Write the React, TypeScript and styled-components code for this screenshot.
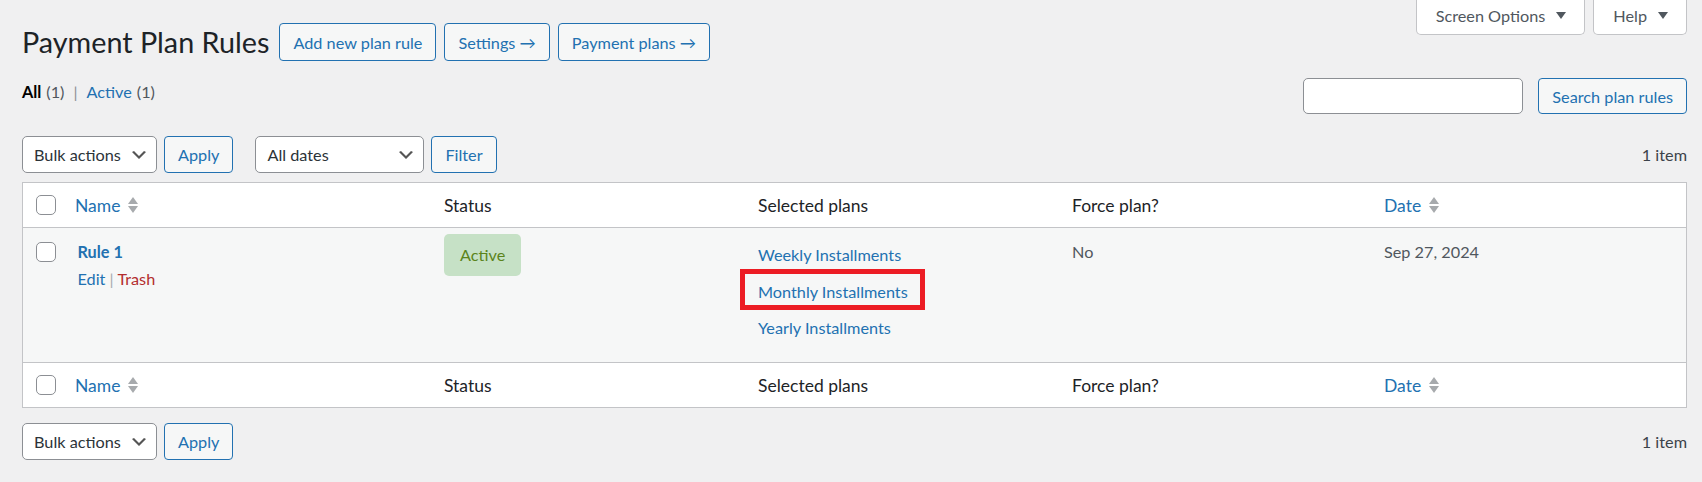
import * as React from 'react';
import styled, { createGlobalStyle } from 'styled-components';

const GlobalStyle = createGlobalStyle`
    * { box-sizing: border-box; }
    body {
        margin: 0;
        background: #f0f0f1;
        font-family: Lato, "Liberation Sans", sans-serif;
        font-size: 16.25px;
        color: #3c434a;
    }
`

const Wrap = styled.div`
    padding: 0 15px 0 22px;
    min-height: 482px;
`
const TopBar = styled.div`
    display: flex;
    justify-content: space-between;
    align-items: flex-start;
`
const Heading = styled.div`
    display: flex;
    align-items: center;
    height: 38px;
    margin-top: 23px;
`
const Title = styled.h1`
    margin: 0 10px 0 0;
    font-size: 28.75px;
    font-weight: 400;
    line-height: 38px;
    color: #1d2327;
`
const OutlineButton = styled.button<{ $h?: number }>`
    height: ${p => p.$h ?? 37}px;
    padding: 0 13px;
    border: 1px solid #2271b1;
    border-radius: 4px;
    background: #f6f7f7;
    color: #2271b1;
    font-family: inherit;
    font-size: 16.25px;
    white-space: nowrap;
    cursor: pointer;
`
const TitleAction = styled(OutlineButton)`
    margin-right: 8px;
`
const MetaLinks = styled.div`
    display: flex;
    gap: 8px;
`
const MetaTab = styled.button`
    height: 35px;
    display: flex;
    align-items: center;
    gap: 11px;
    padding: 0 18px 3px 19px;
    background: #fff;
    border: 1px solid #c3c4c7;
    border-top: none;
    border-radius: 0 0 5px 5px;
    color: #50575e;
    font-family: inherit;
    font-size: 16.25px;
`
const SubRow = styled.div`
    display: flex;
    justify-content: space-between;
    align-items: flex-start;
    margin-top: 17px;
`
const Views = styled.div`
    display: flex;
    margin-top: 2px;
    line-height: 24px;
    font-size: 16.25px;
`
const ViewLink = styled.a<{ $current?: boolean }>`
    color: ${p => p.$current ? '#000' : '#2271b1'};
    font-weight: ${p => p.$current ? 700 : 400};
    text-decoration: none;
`
const Count = styled.span`
    color: #50575e;
    margin-left: 5px;
`
const Sep = styled.span`
    color: #8c8f94;
    margin: 0 9px;
`
const SearchBox = styled.div`
    display: flex;
    gap: 15px;
`
const SearchInput = styled.input`
    width: 220px;
    height: 36px;
    border: 1px solid #8c8f94;
    border-radius: 5px;
    background: #fff;
`
const TableNav = styled.div<{ $top?: boolean }>`
    display: flex;
    justify-content: space-between;
    align-items: center;
    height: 37px;
    margin-top: ${p => p.$top ? 22 : 15}px;
`
const NavLeft = styled.div`
    display: flex;
    gap: 22px;
`
const ActionGroup = styled.div`
    display: flex;
    gap: 7px;
`
const FakeSelect = styled.div<{ $w: number }>`
    width: ${p => p.$w}px;
    height: 37px;
    display: flex;
    align-items: center;
    justify-content: space-between;
    padding: 0 7px 0 11px;
    background: #fff;
    border: 1px solid #8c8f94;
    border-radius: 5px;
    color: #2c3338;
    font-size: 16.25px;
`
const ItemCount = styled.span`
    color: #3c434a;
    font-size: 16.25px;
`
const ListTable = styled.table`
    width: 100%;
    margin-top: 9px;
    border-collapse: collapse;
    table-layout: fixed;
    background: #fff;
    border: 1px solid #c3c4c7;
`
const HeadRow = styled.tr<{ $foot?: boolean }>`
    border-${p => p.$foot ? 'top' : 'bottom'}: 1px solid #c3c4c7;
`
const HeadCell = styled.th<{ $w?: number; $check?: boolean }>`
    ${p => p.$w ? `width: ${p.$w}px;` : ''}
    height: 45px;
    padding: ${p => p.$check ? '0 0 0 13px' : '0 12.5px'};
    text-align: left;
    vertical-align: middle;
    font-size: 17.5px;
    font-weight: 400;
    color: #1d2327;
`
const SortLink = styled.a`
    display: inline-flex;
    align-items: center;
    gap: 8px;
    color: #2271b1;
    text-decoration: none;
`
const BodyRow = styled.tr`
    background: #f6f7f7;
`
const Cell = styled.td<{ $check?: boolean; $pl?: number }>`
    vertical-align: top;
    padding: ${p => p.$check ? '14px 0 0 13px' : `12px 12.5px 22px ${p.$pl ?? 12.5}px`};
    line-height: 24px;
    font-size: 16.25px;
    color: #50575e;
`
const Checkbox = styled.span`
    display: block;
    width: 20px;
    height: 20px;
    background: #fff;
    border: 1px solid #8c8f94;
    border-radius: 5px;
`
const RowTitle = styled.a`
    display: block;
    color: #2271b1;
    font-weight: 700;
    text-decoration: none;
`
const RowActions = styled.div`
    margin-top: 3px;
`
const ActionLink = styled.a<{ $danger?: boolean }>`
    color: ${p => p.$danger ? '#b32d2e' : '#2271b1'};
    text-decoration: none;
`
const ActionSep = styled.span`
    color: #a7aaad;
    margin: 0 4px;
`
const StatusBadge = styled.mark`
    display: inline-flex;
    align-items: center;
    height: 42px;
    margin-top: -6px;
    padding: 0 16px;
    border-radius: 5px;
    background: #c6e1c6;
    color: #5b841b;
`
const PlanList = styled.div`
    margin-top: 3px;
`
const PlanItem = styled.div`
    & + & { margin-top: 12.5px; }
`
const PlanLink = styled.a<{ $marked?: boolean }>`
    position: relative;
    display: inline-block;
    color: #2271b1;
    text-decoration: none;
    ${p => p.$marked ? `
    &::after {
        content: '';
        position: absolute;
        top: -11px;
        right: -17px;
        bottom: -6px;
        left: -18px;
        border: 5px solid #ec1c24;
    }` : ''}
`

const Caret = () => (
    <svg width="10" height="7" viewBox="0 0 10 7"><path d="M0 0h10L5 7z" fill="#50575e" /></svg>
);

const Chevron = () => (
    <svg width="20" height="20" viewBox="0 0 20 20"><path d="M5 6l5 5 5-5 2 1-7 7-7-7 2-1z" fill="#555" /></svg>
);

const SortIcon = () => (
    <svg width="10" height="16" viewBox="0 0 10 16">
        <path d="M0 7L5 0L10 7z" fill="#a7aaad" />
        <path d="M0 9h10L5 16z" fill="#a7aaad" />
    </svg>
);

const plans = ['Weekly Installments', 'Monthly Installments', 'Yearly Installments'];

const Columns = ({ foot }: { foot?: boolean }) => (
    <HeadRow $foot={foot}>
        <HeadCell $w={40} $check><Checkbox /></HeadCell>
        <HeadCell $w={369}><SortLink>Name <SortIcon /></SortLink></HeadCell>
        <HeadCell $w={314}>Status</HeadCell>
        <HeadCell $w={314}>Selected plans</HeadCell>
        <HeadCell $w={312}>Force plan?</HeadCell>
        <HeadCell><SortLink>Date <SortIcon /></SortLink></HeadCell>
    </HeadRow>
);

const BulkActions = () => (
    <ActionGroup>
        <FakeSelect $w={135}>Bulk actions <Chevron /></FakeSelect>
        <OutlineButton>Apply</OutlineButton>
    </ActionGroup>
);

export default function App() {
    return (
        <>
            <GlobalStyle />
            <Wrap>
                <TopBar>
                    <Heading>
                        <Title>Payment Plan Rules</Title>
                        <TitleAction $h={38}>Add new plan rule</TitleAction>
                        <TitleAction $h={38}>Settings →</TitleAction>
                        <TitleAction $h={38}>Payment plans →</TitleAction>
                    </Heading>
                    <MetaLinks>
                        <MetaTab>Screen Options <Caret /></MetaTab>
                        <MetaTab>Help <Caret /></MetaTab>
                    </MetaLinks>
                </TopBar>

                <SubRow>
                    <Views>
                        <ViewLink $current>All</ViewLink><Count>(1)</Count>
                        <Sep>|</Sep>
                        <ViewLink>Active</ViewLink><Count>(1)</Count>
                    </Views>
                    <SearchBox>
                        <SearchInput type="search" />
                        <OutlineButton $h={36}>Search plan rules</OutlineButton>
                    </SearchBox>
                </SubRow>

                <TableNav $top>
                    <NavLeft>
                        <BulkActions />
                        <ActionGroup>
                            <FakeSelect $w={169}>All dates <Chevron /></FakeSelect>
                            <OutlineButton>Filter</OutlineButton>
                        </ActionGroup>
                    </NavLeft>
                    <ItemCount>1 item</ItemCount>
                </TableNav>

                <ListTable>
                    <thead><Columns /></thead>
                    <tbody>
                        <BodyRow>
                            <Cell $check><Checkbox /></Cell>
                            <Cell $pl={15}>
                                <RowTitle>Rule 1</RowTitle>
                                <RowActions>
                                    <ActionLink>Edit</ActionLink>
                                    <ActionSep>|</ActionSep>
                                    <ActionLink $danger>Trash</ActionLink>
                                </RowActions>
                            </Cell>
                            <Cell><StatusBadge>Active</StatusBadge></Cell>
                            <Cell>
                                <PlanList>
                                    {plans.map(p => (
                                        <PlanItem key={p}>
                                            <PlanLink $marked={p === 'Monthly Installments'}>{p}</PlanLink>
                                        </PlanItem>
                                    ))}
                                </PlanList>
                            </Cell>
                            <Cell>No</Cell>
                            <Cell>Sep 27, 2024</Cell>
                        </BodyRow>
                    </tbody>
                    <tfoot><Columns foot /></tfoot>
                </ListTable>

                <TableNav>
                    <BulkActions />
                    <ItemCount>1 item</ItemCount>
                </TableNav>
            </Wrap>
        </>
    );
}
